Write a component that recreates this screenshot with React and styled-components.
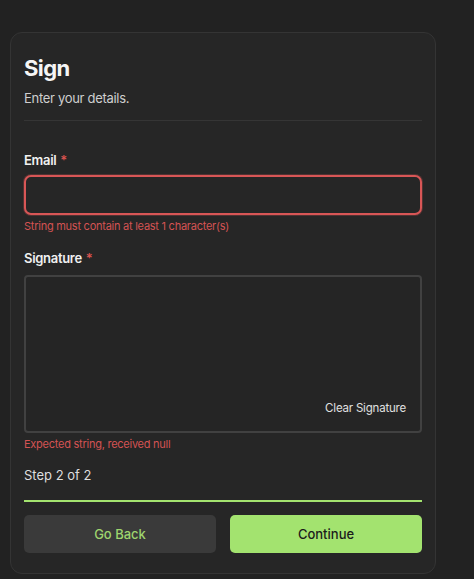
import styled, { createGlobalStyle } from "styled-components";

const GlobalStyle = createGlobalStyle`
  html, body {
    margin: 0;
    padding: 0;
    background: #222222;
    font-family: Inter, "Noto Sans", sans-serif;
    color: #f2f2f2;
  }
  * { box-sizing: border-box; }
`;

const Page = styled.div`
  width: 474px;
  height: 579px;
  padding: 32px 38px 0 10px;
  overflow: hidden;
`;

const Card = styled.div`
  width: 426px;
  background: #262626;
  border: 1px solid #343434;
  border-radius: 12px;
  padding: 21px 13px 20px 13px;
  display: flex;
  flex-direction: column;
`;

const Title = styled.h1`
  margin: 0;
  font-size: 22px;
  line-height: 28px;
  font-weight: 700;
  letter-spacing: -0.6px;
  color: #f5f5f5;
`;

const Subtitle = styled.p`
  margin: 7px 0 0;
  font-size: 13px;
  line-height: 18px;
  letter-spacing: -0.3px;
  color: #cfcfcf;
`;

const Divider = styled.hr`
  margin: 13px 0 0;
  border: none;
  border-top: 1px solid #353535;
`;

const Field = styled.div`
  margin-top: ${(p) => p.$top}px;
  display: flex;
  flex-direction: column;
`;

const Label = styled.label`
  font-size: 13px;
  line-height: 18px;
  font-weight: 600;
  letter-spacing: -0.3px;
  color: #f0f0f0;
  margin-bottom: ${(p) => p.$gap}px;

  span {
    color: #d9534f;
    margin-left: 4px;
  }
`;

const Input = styled.input`
  height: 40px;
  width: 100%;
  background: #262626;
  border: 2px solid #d85656;
  border-radius: 7px;
  outline: none;
  box-shadow: 0 0 0 1px rgba(216, 86, 86, 0.25);
  color: #f0f0f0;
  font: inherit;
  padding: 0 12px;
`;

const ErrorText = styled.div`
  margin-top: 4px;
  font-size: 11px;
  line-height: 14px;
  letter-spacing: -0.25px;
  color: #d45353;
`;

const SignBox = styled.div`
  height: 158px;
  border: 2px solid #414141;
  border-radius: 4px;
  background: #252525;
  display: flex;
  align-items: flex-end;
  justify-content: flex-end;
  padding: 0 14px 16px 0;
`;

const ClearButton = styled.button`
  background: none;
  border: none;
  padding: 0;
  font: inherit;
  font-size: 11.5px;
  letter-spacing: -0.2px;
  color: #e0e0e0;
  cursor: pointer;
`;

const Step = styled.div`
  margin-top: 15px;
  font-size: 13px;
  line-height: 18px;
  color: #dedede;
`;

const Progress = styled.div`
  flex-shrink: 0;
  margin-top: 16px;
  height: 2px;
  background: #a3e36f;
`;

const Actions = styled.div`
  margin-top: 13px;
  display: grid;
  grid-template-columns: 1fr 1fr;
  gap: 14px;
`;

const Button = styled.button`
  height: 38px;
  border: none;
  border-radius: 5px;
  font: inherit;
  font-size: 13px;
  font-weight: 500;
  cursor: pointer;
  background: ${(p) => (p.$primary ? "#a3e36f" : "#3a3a3a")};
  color: ${(p) => (p.$primary ? "#1b1b1b" : "#9ed46e")};
`;

export default function App() {
  return (
    <>
      <GlobalStyle />
      <Page>
        <Card>
          <Title>Sign</Title>
          <Subtitle>Enter your details.</Subtitle>
          <Divider />
          <Field $top={30}>
            <Label $gap={6}>
              Email<span>*</span>
            </Label>
            <Input type="email" />
            <ErrorText>String must contain at least 1 character(s)</ErrorText>
          </Field>
          <Field $top={16}>
            <Label $gap={8}>
              Signature<span>*</span>
            </Label>
            <SignBox>
              <ClearButton>Clear Signature</ClearButton>
            </SignBox>
            <ErrorText>Expected string, received null</ErrorText>
          </Field>
          <Step>Step 2 of 2</Step>
          <Progress />
          <Actions>
            <Button>Go Back</Button>
            <Button $primary>Continue</Button>
          </Actions>
        </Card>
      </Page>
    </>
  );
}
